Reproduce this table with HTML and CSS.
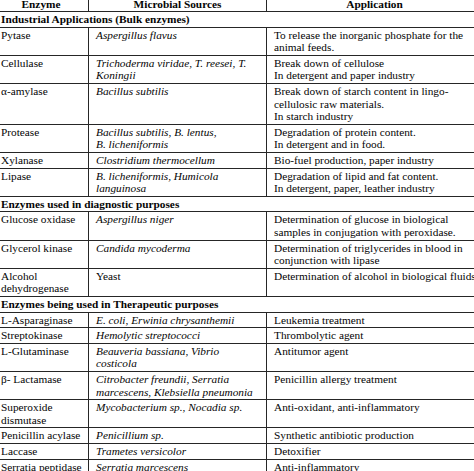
FILE: index.html
```html
<!DOCTYPE html>
<html>
<head>
<meta charset="utf-8">
<link rel="stylesheet" href="styles.css">
</head>
<body>
<div class="frame">
<table class="enz">
<colgroup><col class="c1"><col class="c2"><col class="c3"></colgroup>
<thead>
<tr class="head"><th>Enzyme</th><th>Microbial Sources</th><th>Application</th></tr>
</thead>
<tbody>
<tr class="sec"><td colspan="3">Industrial Applications (Bulk enzymes)</td></tr>
<tr><td>Pytase</td><td class="src">Aspergillus flavus</td><td>To release the inorganic phosphate for the<br>animal feeds.</td></tr>
<tr><td>Cellulase</td><td class="src">Trichoderma viridae, T. reesei, T.<br>Koningii</td><td>Break down of cellulose<br>In detergent and paper industry</td></tr>
<tr><td>α-amylase</td><td class="src">Bacillus subtilis</td><td>Break down of starch content in lingo-<br>cellulosic raw materials.<br>In starch industry</td></tr>
<tr><td>Protease</td><td class="src">Bacillus subtilis, B. lentus,<br>B. licheniformis</td><td>Degradation of protein content.<br>In detergent and in food.</td></tr>
<tr><td>Xylanase</td><td class="src">Clostridium thermocellum</td><td>Bio-fuel production, paper industry</td></tr>
<tr><td>Lipase</td><td class="src">B. licheniformis, Humicola<br>languinosa</td><td>Degradation of lipid and fat content.<br>In detergent, paper, leather industry</td></tr>
<tr class="sec"><td colspan="3">Enzymes used in diagnostic purposes</td></tr>
<tr><td>Glucose oxidase</td><td class="src">Aspergillus niger</td><td>Determination of glucose in biological<br>samples in conjugation with peroxidase.</td></tr>
<tr><td>Glycerol kinase</td><td class="src">Candida mycoderma</td><td>Determination of triglycerides in blood in<br>conjunction with lipase</td></tr>
<tr><td>Alcohol<br>dehydrogenase</td><td>Yeast</td><td>Determination of alcohol in biological fluids</td></tr>
<tr class="sec"><td colspan="3">Enzymes being used in Therapeutic purposes</td></tr>
<tr><td>L-Asparaginase</td><td class="src">E. coli, Erwinia chrysanthemii</td><td>Leukemia treatment</td></tr>
<tr><td>Streptokinase</td><td class="src">Hemolytic streptococci</td><td>Thrombolytic agent</td></tr>
<tr><td>L-Glutaminase</td><td class="src">Beauveria bassiana, Vibrio<br>costicola</td><td>Antitumor agent</td></tr>
<tr><td>β- Lactamase</td><td class="src">Citrobacter freundii, Serratia<br>marcescens, Klebsiella pneumonia</td><td>Penicillin allergy treatment</td></tr>
<tr><td>Superoxide<br>dismutase</td><td class="src">Mycobacterium sp., Nocadia sp.</td><td>Anti-oxidant, anti-inflammatory</td></tr>
<tr><td>Penicillin acylase</td><td class="src">Penicillium sp.</td><td>Synthetic antibiotic production</td></tr>
<tr><td>Laccase</td><td class="src">Trametes versicolor</td><td>Detoxifier</td></tr>
<tr><td>Serratia peptidase</td><td class="src">Serratia marcescens</td><td>Anti-inflammatory</td></tr>
</tbody>
</table>
</div>
</body>
</html>
```

FILE: styles.css
```css
html, body {
  margin: 0;
  padding: 0;
  background: #ffffff;
  overflow: hidden;
}

.frame {
  margin: -4.5px 0 0 -7px;
}

.enz {
  border-collapse: collapse;
  table-layout: fixed;
  width: 489px;
  font-family: "Liberation Serif", "Times New Roman", serif;
  font-size: 11.3px;
  line-height: 12.6px;
  color: #050505;
}

.c1 { width: 95px; }
.c2 { width: 178px; }
.c3 { width: 216px; }

.enz th,
.enz td {
  border: 1px solid #262626;
  padding: 1px 7px 1px 7px;
  vertical-align: top;
  text-align: left;
  white-space: nowrap;
  overflow: visible;
}

.enz th {
  font-weight: bold;
  text-align: center;
}

.sec td {
  font-weight: bold;
}

.src {
  font-style: italic;
}
```
